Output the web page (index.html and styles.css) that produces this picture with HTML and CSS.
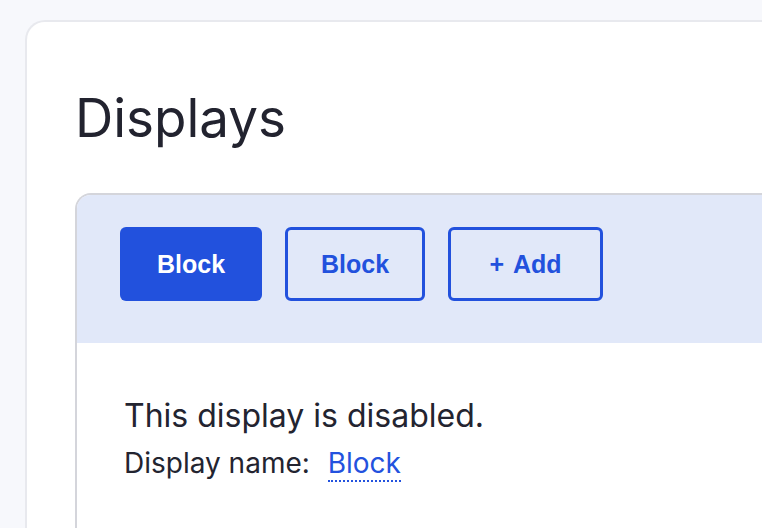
FILE: index.html
```html
<!DOCTYPE html>
<html lang="en">
<head>
<meta charset="utf-8">
<title>Displays</title>
<link rel="stylesheet" href="styles.css">
</head>
<body>
<main class="card">
  <h1 class="title">Displays</h1>
  <section class="displays">
    <div class="tabs">
      <a class="btn btn-primary" href="#">Block</a>
      <a class="btn btn-outline btn-block" href="#">Block</a>
      <a class="btn btn-outline btn-add" href="#"><span class="plus">+</span> Add</a>
    </div>
    <div class="content">
      <p class="disabled">This display is disabled.</p>
      <p class="name">Display name: <a class="link" href="#">Block</a></p>
    </div>
  </section>
</main>
</body>
</html>
```

FILE: styles.css
```css
html, body {
  margin: 0;
  padding: 0;
}
body {
  background: #f7f8fc;
  font-family: Inter, "Noto Sans", sans-serif;
  color: #232430;
  height: 528px;
  overflow: hidden;
}
.card {
  display: block;
  margin: 20px 0 0 25px;
  height: 508px;
  box-sizing: border-box;
  background: #fff;
  border: 2px solid #e8e9ee;
  border-right: none;
  border-bottom: none;
  border-radius: 20px 0 0 0;
  padding: 0 0 0 48px;
  overflow: hidden;
}
.title {
  margin: 0;
  padding-top: 64px;
  font-weight: 400;
  font-size: 53px;
  line-height: 64px;
  color: #22232f;
}
.displays {
  margin-top: 43px;
  border: 2px solid #d4d5db;
  border-right: none;
  border-bottom: none;
  border-radius: 16px 0 0 0;
  overflow: hidden;
}
.tabs {
  display: flex;
  gap: 23px;
  background: #e1e8f9;
  padding: 32px 0 42px 43px;
}
.btn {
  display: flex;
  align-items: center;
  justify-content: center;
  box-sizing: border-box;
  height: 74px;
  border-radius: 6px;
  font-family: "Liberation Sans", Arial, sans-serif;
  font-weight: 700;
  font-size: 25px;
  text-decoration: none;
}
.btn-primary {
  width: 142px;
  background: #2251dd;
  color: #fff;
}
.btn-outline {
  border: 3px solid #2251dd;
  color: #2251dd;
  background: transparent;
}
.btn-block {
  width: 140px;
}
.btn-add {
  width: 155px;
}
.plus {
  margin-right: 9px;
}
.content {
  padding: 52px 0 80px 47px;
}
.disabled {
  margin: 0;
  font-size: 32px;
  line-height: 42px;
}
.name {
  margin: 8px 0 0;
  font-size: 28px;
  line-height: 36px;
}
.link {
  margin-left: 10px;
  color: #2352de;
  text-decoration: none;
  border-bottom: 2px dotted #2352de;
}
```
